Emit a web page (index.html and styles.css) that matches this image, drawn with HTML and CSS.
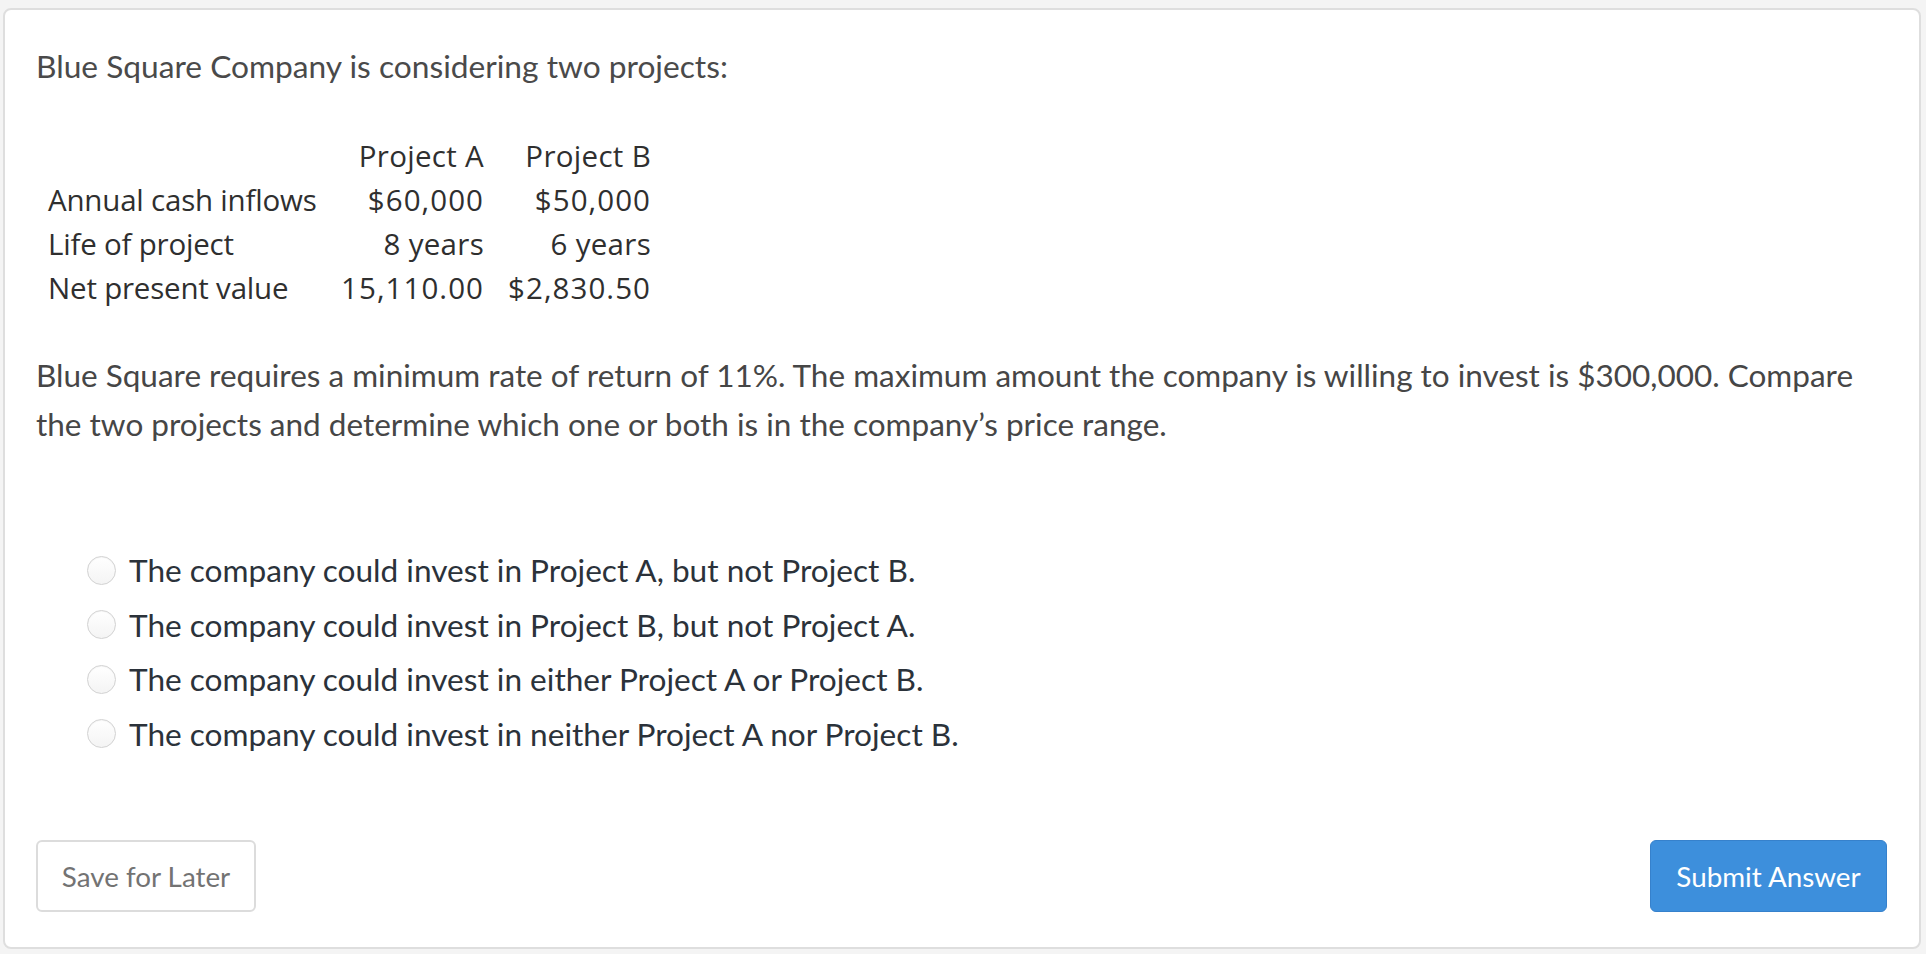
FILE: index.html
```html
<!DOCTYPE html>
<html lang="en">
<head>
<meta charset="utf-8">
<title>Question</title>
<link rel="stylesheet" href="styles.css">
</head>
<body>
<div class="card">
  <p class="title">Blue Square Company is considering two projects:</p>
  <div class="data">
    <span></span><span class="head">Project A</span><span class="head">Project B</span>
    <span>Annual cash inflows</span><span class="num">$60,000</span><span class="num">$50,000</span>
    <span>Life of project</span><span class="head">8 years</span><span class="head">6 years</span>
    <span>Net present value</span><span class="num">15,110.00</span><span class="num">$2,830.50</span>
  </div>
  <p class="question">Blue Square requires a minimum rate of return of 11%. The maximum amount the company is willing to invest is $300,000. Compare the two projects and determine which one or both is in the company’s price range.</p>
  <div class="options">
    <label class="option"><input type="radio" name="a" class="radio"><span>The company could invest in Project A, but not Project B.</span></label>
    <label class="option"><input type="radio" name="a" class="radio"><span>The company could invest in Project B, but not Project A.</span></label>
    <label class="option"><input type="radio" name="a" class="radio"><span>The company could invest in either Project A or Project B.</span></label>
    <label class="option"><input type="radio" name="a" class="radio"><span>The company could invest in neither Project A nor Project B.</span></label>
  </div>
  <div class="actions">
    <button class="btn btn-save">Save for Later</button>
    <button class="btn btn-submit">Submit Answer</button>
  </div>
</div>
</body>
</html>
```
FILE: styles.css
```css
html, body {
  margin: 0;
  padding: 0;
  background: #f4f4f4;
}
body {
  font-family: Lato, "Liberation Sans", sans-serif;
}
.card {
  margin: 8px 5px 5px 3px;
  background: #fff;
  border: 2px solid #dedede;
  border-radius: 8px;
  padding: 36px 32px 34px 31px;
  box-sizing: border-box;
  height: 941px;
}
.title {
  margin: 0;
  font-size: 31.7px;
  line-height: 40px;
  color: #4a4a4a;
}
.data {
  margin: 48px 0 0 12px;
  display: grid;
  grid-template-columns: 290px 146px 167px;
  font-family: "Open Sans", sans-serif;
  font-size: 29.5px;
  line-height: 44px;
  color: #2f2f2f;
  letter-spacing: -0.2px;
}
.data .head {
  text-align: right;
  letter-spacing: 0.3px;
}
.data .num {
  text-align: right;
  letter-spacing: 1.05px;
}
.question {
  margin: 41px 0 0 0;
  font-size: 31.5px;
  line-height: 49px;
  color: #464646;
}
.options {
  margin-top: 94px;
  display: flex;
  flex-direction: column;
}
.option {
  display: flex;
  align-items: center;
  height: 54.5px;
  font-size: 31.6px;
  color: #2b323a;
  padding-left: 51px;
}
.radio {
  appearance: none;
  -webkit-appearance: none;
  margin: 0 13px 0 0;
  width: 29px;
  height: 29px;
  border-radius: 50%;
  border: 1.5px solid #d2d2d2;
  background: linear-gradient(#ffffff, #f4f4f4);
  box-shadow: inset 0 1px 1px rgba(0,0,0,0.04);
  box-sizing: border-box;
  flex: none;
}
.actions {
  margin-top: 79px;
  display: flex;
  justify-content: space-between;
}
.btn {
  height: 72px;
  font-family: Lato, "Liberation Sans", sans-serif;
  font-size: 27.8px;
  border-radius: 6px;
  cursor: pointer;
}
.btn-save {
  width: 220px;
  background: #fff;
  border: 2px solid #dcdcdc;
  color: #737373;
}
.btn-submit {
  width: 237px;
  background: #3d8fdc;
  border: 1px solid #3681cc;
  color: #fff;
}
```
